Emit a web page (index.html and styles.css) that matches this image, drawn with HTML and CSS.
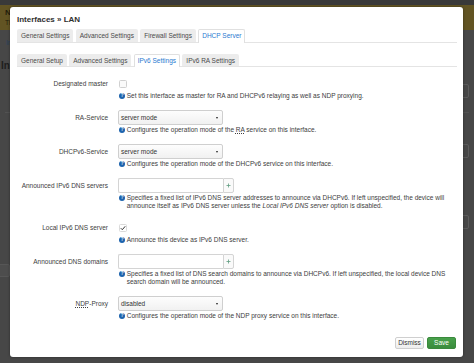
FILE: index.html
```html
<!DOCTYPE html>
<html>
<head>
<meta charset="utf-8">
<title>Interfaces » LAN</title>
<link rel="stylesheet" href="styles.css">
</head>
<body>
<div class="page">
  <div class="nav"></div>
  <div class="alert">
    <div class="alert-title">No password set!</div>
    <div class="alert-text">There is no password set on this router.</div>
  </div>
  <div class="crumb">Interfaces</div>
  <div class="page-title">Interfaces</div>
  <div class="bg-form">
    <div class="bg-row r1"><span class="bg-input"></span></div>
    <div class="bg-row r2"><span class="bg-input"></span></div>
    <div class="bg-row r3"><span class="bg-input"></span></div>
    <div class="bg-row r4"><span class="bg-btn"></span></div>
  </div>
</div>

<div class="modal">
  <h4 class="modal-title">Interfaces » LAN</h4>
  <ul class="tabs tabs-main">
    <li class="tab">General Settings</li>
    <li class="tab">Advanced Settings</li>
    <li class="tab">Firewall Settings</li>
    <li class="tab active">DHCP Server</li>
  </ul>
  <ul class="tabs tabs-sub">
    <li class="tab">General Setup</li>
    <li class="tab">Advanced Settings</li>
    <li class="tab active">IPv6 Settings</li>
    <li class="tab">IPv6 RA Settings</li>
  </ul>

  <div class="form">
    <div class="row">
      <label class="lbl">Designated master</label>
      <div class="field">
        <div class="ctl"><span class="cb"></span></div>
        <div class="help"><span class="q">?</span><span class="ht">Set this interface as master for RA and DHCPv6 relaying as well as NDP proxying.</span></div>
      </div>
    </div>

    <div class="row">
      <label class="lbl">RA-Service</label>
      <div class="field">
        <div class="ctl"><div class="select"><span>server mode</span><span class="caret"></span></div></div>
        <div class="help"><span class="q">?</span><span class="ht">Configures the operation mode of the <abbr>RA</abbr> service on this interface.</span></div>
      </div>
    </div>

    <div class="row">
      <label class="lbl">DHCPv6-Service</label>
      <div class="field">
        <div class="ctl"><div class="select"><span>server mode</span><span class="caret"></span></div></div>
        <div class="help"><span class="q">?</span><span class="ht">Configures the operation mode of the DHCPv6 service on this interface.</span></div>
      </div>
    </div>

    <div class="row">
      <label class="lbl">Announced IPv6 DNS servers</label>
      <div class="field">
        <div class="ctl"><div class="igroup"><span class="input"></span><span class="add"><svg viewBox="0 0 5 5" width="5" height="5"><path d="M2.5 0.5 V4.5 M0.5 2.5 H4.5" stroke="#5f9c80" stroke-width="0.8" fill="none"/></svg></span></div></div>
        <div class="help"><span class="q">?</span><span class="ht">Specifies a fixed list of IPv6 DNS server addresses to announce via DHCPv6. If left unspecified, the device will announce itself as IPv6 DNS server unless the <em>Local IPv6 DNS server</em> option is disabled.</span></div>
      </div>
    </div>

    <div class="row">
      <label class="lbl">Local IPv6 DNS server</label>
      <div class="field">
        <div class="ctl"><span class="cb checked"><svg viewBox="0 0 8 8" width="8" height="8"><path d="M1.8 4.2 L3.3 5.7 L6.2 2.3" fill="none" stroke="#333" stroke-width="1"/></svg></span></div>
        <div class="help"><span class="q">?</span><span class="ht">Announce this device as IPv6 DNS server.</span></div>
      </div>
    </div>

    <div class="row">
      <label class="lbl">Announced DNS domains</label>
      <div class="field">
        <div class="ctl"><div class="igroup"><span class="input"></span><span class="add"><svg viewBox="0 0 5 5" width="5" height="5"><path d="M2.5 0.5 V4.5 M0.5 2.5 H4.5" stroke="#5f9c80" stroke-width="0.8" fill="none"/></svg></span></div></div>
        <div class="help"><span class="q">?</span><span class="ht">Specifies a fixed list of DNS search domains to announce via DHCPv6. If left unspecified, the local device DNS search domain will be announced.</span></div>
      </div>
    </div>

    <div class="row">
      <label class="lbl"><abbr>NDP</abbr>-Proxy</label>
      <div class="field">
        <div class="ctl"><div class="select"><span>disabled</span><span class="caret"></span></div></div>
        <div class="help"><span class="q">?</span><span class="ht">Configures the operation mode of the NDP proxy service on this interface.</span></div>
      </div>
    </div>
  </div>

  <div class="footer">
    <button class="btn">Dismiss</button>
    <button class="btn save">Save</button>
  </div>
</div>
</body>
</html>
```

FILE: styles.css
```css
* { box-sizing: border-box; }
html, body { margin: 0; padding: 0; }
body {
  width: 474px;
  height: 363px;
  overflow: hidden;
  background: #474747;
  font-family: "Liberation Sans", Arial, Helvetica, sans-serif;
  font-size: 6.5px;
  color: #404040;
  position: relative;
}

/* dimmed background page */
.page { height: 363px; }
.nav { height: 5px; background: #393939; }
.alert {
  height: 25px;
  background: #625423;
  padding: 3px 5px;
  color: #221d0c;
}
.alert-title, .alert-text, .crumb, .page-title {
  white-space: nowrap;
  overflow: hidden;
}
.alert-title { font-weight: bold; font-size: 8px; line-height: 10px; width: 5px; }
.alert-text { font-size: 6.5px; line-height: 9px; width: 5px; }
.crumb {
  margin-top: 9px;
  margin-left: 6px;
  width: 4px;
  color: #29405c;
  font-size: 6.5px;
  line-height: 8px;
}
.page-title {
  margin-top: 13px;
  margin-left: 1px;
  width: 9px;
  font-size: 10px;
  font-weight: bold;
  color: #1e1e1e;
  line-height: 12px;
}
.bg-form { padding: 0 5px; }
.bg-row { display: flex; justify-content: flex-end; }
.bg-row.r1 { margin-top: 12px; padding-bottom: 14px; border-bottom: 1px solid #525252; }
.bg-row.r2 { margin-top: 31px; }
.bg-row.r3 { margin-top: 57px; }
.bg-row.r4 { margin-top: 35px; justify-content: flex-start; }
.bg-input { display: block; width: 40px; height: 14px; border: 1px solid #5c5c5c; border-radius: 2px; }
.bg-btn { display: block; width: 40px; height: 13px; border: 1px solid #565656; background: #4d4d4d; border-radius: 2px; margin-left: -35px; }

/* modal */
.modal {
  position: absolute;
  left: 10px;
  top: 7px;
  width: 453px;
  height: 350px;
  background: #fff;
  border-radius: 3px;
  box-shadow: 0 0 3px rgba(0,0,0,.4);
  padding: 8px 6px 8px 7px;
  display: flex;
  flex-direction: column;
}
.modal-title {
  margin: 0;
  font-size: 8px;
  line-height: 10px;
  font-weight: bold;
  color: #303030;
}
.tabs {
  list-style: none;
  margin: 4px 0 0;
  padding: 0;
  display: flex;
  gap: 2.3px;
  border-bottom: 1px solid #e4e4e4;
}
.tabs-sub { margin-top: 11px; }
.tab {
  height: 13px;
  padding: 0 3px;
  background: #ececec;
  color: #4a4a4a;
  white-space: nowrap;
  margin-bottom: -1px;
  border: 1px solid transparent;
  border-bottom: 0;
  line-height: 12px;
  border-radius: 2px 2px 0 0;
}
.tabs-sub .tab { height: 12px; line-height: 11px; }
.tab.active {
  background: #fff;
  color: #2a7ad0;
  border-color: #e0e0e0;
  height: 14px;
}
.tabs-sub .tab.active { height: 13px; }

.form { margin-top: 9px; }
.row {
  display: grid;
  grid-template-columns: 91px 1fr;
  column-gap: 10px;
  margin-bottom: 10px;
}
.lbl {
  text-align: right;
  line-height: 15px;
  height: 15px;
  white-space: nowrap;
  color: #404040;
}
abbr { text-decoration: underline dotted; cursor: help; }
.ctl { height: 15px; display: flex; align-items: center; }
.cb {
  display: block;
  width: 8px;
  height: 8px;
  border: 1px solid #d0d0d0;
  border-radius: 1.5px;
  background: #fafafa;
  margin-left: 0.5px;
  position: relative;
}
.cb svg { position: absolute; left: -1px; top: -1px; }
.cb.checked { border-color: #dadada; background: #fff; }
.select {
  width: 105px;
  height: 15px;
  border: 1px solid #cfcfcf;
  border-radius: 2px;
  background: linear-gradient(#fdfdfd, #f1f1f1);
  display: flex;
  align-items: center;
  justify-content: space-between;
  padding: 0 4px 0 2px;
  color: #333;
}
.caret {
  width: 0;
  height: 0;
  border-left: 1.8px solid transparent;
  border-right: 1.8px solid transparent;
  border-top: 2.2px solid #222;
}
.igroup { display: flex; height: 15px; }
.input {
  display: block;
  width: 105px;
  height: 15px;
  border: 1px solid #d4d4d4;
  border-right: 0;
  border-radius: 2px 0 0 2px;
  background: #fff;
}
.add {
  display: flex;
  align-items: center;
  justify-content: center;
  width: 11px;
  height: 15px;
  border: 1px solid #d4d4d4;
  border-radius: 0 2px 2px 0;
  background: #fafafa;
}
.help {
  display: flex;
  margin-top: 1px;
  padding-left: 1px;
  line-height: 8px;
  color: #3c3c3c;
}
.q {
  flex: none;
  width: 6px;
  height: 6px;
  margin-top: 1px;
  margin-right: 1.7px;
  border-radius: 50%;
  background: #1d63ad;
  color: #fff;
  font-size: 4.5px;
  font-weight: bold;
  line-height: 6px;
  text-align: center;
}
.ht { flex: 1; padding-right: 2px; }
.ht em { font-style: italic; padding-right: 0.4px; }

.footer {
  margin-top: auto;
  display: flex;
  justify-content: flex-end;
  gap: 3px;
  padding-right: 1px;
}
.btn {
  font-family: inherit;
  font-size: 6.5px;
  height: 12.5px;
  width: 29px;
  padding: 0;
  border: 1px solid #cfcfcf;
  border-radius: 2px;
  background: linear-gradient(#fff, #ededed);
  color: #333;
}
.btn.save {
  background: linear-gradient(#48a14b, #3a8c3d);
  border-color: #3a8a3c;
  color: #fff;
}
```
